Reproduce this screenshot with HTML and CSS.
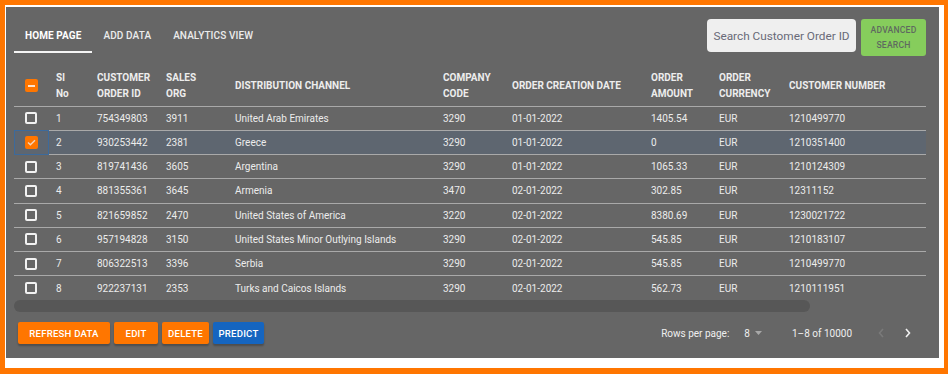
FILE: index.html
```html
<!DOCTYPE html>
<html>
<head>
<meta charset="utf-8">
<link rel="stylesheet" href="styles.css">
</head>
<body>
<div class="frame">
  <div class="panel">
    <div class="topbar">
      <nav class="tabs">
        <span class="tab active">HOME PAGE</span>
        <span class="tab">ADD DATA</span>
        <span class="tab">ANALYTICS VIEW</span>
      </nav>
      <div class="search">
        <div class="search-input">Search Customer Order ID</div>
        <button class="adv-btn">ADVANCED<br>SEARCH</button>
      </div>
    </div>
    <table class="grid">
      <colgroup>
        <col style="width:35px"><col style="width:41px"><col style="width:69px"><col style="width:69px"><col style="width:208px"><col style="width:69px"><col style="width:139px"><col style="width:68px"><col style="width:70px"><col style="width:144px">
      </colgroup>
      <thead>
        <tr>
          <th class="cbcell"><span class="cb cb-ind"><span class="dash"></span></span></th>
          <th>Sl<br>No</th>
          <th>CUSTOMER<br>ORDER ID</th>
          <th>SALES<br>ORG</th>
          <th>DISTRIBUTION CHANNEL</th>
          <th>COMPANY<br>CODE</th>
          <th>ORDER CREATION DATE</th>
          <th>ORDER<br>AMOUNT</th>
          <th>ORDER<br>CURRENCY</th>
          <th>CUSTOMER NUMBER</th>
        </tr>
      </thead>
      <tbody>
        <tr><td class="cbcell"><span class="cb"></span></td><td>1</td><td>754349803</td><td>3911</td><td>United Arab Emirates</td><td>3290</td><td>01-01-2022</td><td>1405.54</td><td>EUR</td><td>1210499770</td></tr>
        <tr class="selected"><td class="cbcell focus"><span class="cb cb-on"><svg width="9" height="7" viewBox="0 0 9 7"><path d="M1 3.5 L3.4 5.8 L8 1.2" fill="none" stroke="#f3d6bf" stroke-width="1.4"/></svg></span></td><td>2</td><td>930253442</td><td>2381</td><td>Greece</td><td>3290</td><td>01-01-2022</td><td>0</td><td>EUR</td><td>1210351400</td></tr>
        <tr><td class="cbcell"><span class="cb"></span></td><td>3</td><td>819741436</td><td>3605</td><td>Argentina</td><td>3290</td><td>01-01-2022</td><td>1065.33</td><td>EUR</td><td>1210124309</td></tr>
        <tr><td class="cbcell"><span class="cb"></span></td><td>4</td><td>881355361</td><td>3645</td><td>Armenia</td><td>3470</td><td>02-01-2022</td><td>302.85</td><td>EUR</td><td>12311152</td></tr>
        <tr><td class="cbcell"><span class="cb"></span></td><td>5</td><td>821659852</td><td>2470</td><td>United States of America</td><td>3220</td><td>02-01-2022</td><td>8380.69</td><td>EUR</td><td>1230021722</td></tr>
        <tr><td class="cbcell"><span class="cb"></span></td><td>6</td><td>957194828</td><td>3150</td><td>United States Minor Outlying Islands</td><td>3290</td><td>02-01-2022</td><td>545.85</td><td>EUR</td><td>1210183107</td></tr>
        <tr><td class="cbcell"><span class="cb"></span></td><td>7</td><td>806322513</td><td>3396</td><td>Serbia</td><td>3290</td><td>02-01-2022</td><td>545.85</td><td>EUR</td><td>1210499770</td></tr>
        <tr class="last"><td class="cbcell"><span class="cb"></span></td><td>8</td><td>922237131</td><td>2353</td><td>Turks and Caicos Islands</td><td>3290</td><td>02-01-2022</td><td>562.73</td><td>EUR</td><td>1210111951</td></tr>
      </tbody>
    </table>
    <div class="scrollbar"><div class="thumb"></div></div>
    <div class="footer">
      <div class="actions">
        <button class="btn orange w-refresh">REFRESH DATA</button>
        <button class="btn orange w-edit">EDIT</button>
        <button class="btn orange w-delete">DELETE</button>
        <button class="btn blue w-predict">PREDICT</button>
      </div>
      <div class="pager">
        <span class="rpp">Rows per page:</span>
        <span class="sel">8 <svg width="7" height="4" viewBox="0 0 7 4"><path d="M0 0 L7 0 L3.5 4 Z" fill="#a8a8a8"/></svg></span>
        <span class="range">1–8 of 10000</span>
        <span class="nav prev"><svg width="6" height="10" viewBox="0 0 6 10"><path d="M5 1 L1.5 5 L5 9" fill="none" stroke="#7a7a7a" stroke-width="1.6"/></svg></span>
        <span class="nav"><svg width="6" height="10" viewBox="0 0 6 10"><path d="M1 1 L4.5 5 L1 9" fill="none" stroke="#f2f2f2" stroke-width="1.6"/></svg></span>
      </div>
    </div>
  </div>
</div>
</body>
</html>
```
FILE: styles.css
```css
* { box-sizing: border-box; }
html, body { margin: 0; padding: 0; }
body {
  background: #ff7600;
  width: 948px;
  height: 374px;
  padding: 5px 0 0 5px;
  font-family: Roboto, "Liberation Sans", sans-serif;
  overflow: hidden;
}
.frame {
  width: 939px;
  height: 363px;
  background: #ffffff;
  padding: 2px 0 0 1px;
}
.panel {
  width: 933px;
  height: 351px;
  background: #666666;
  padding: 12px 13px 0 8px;
}
.topbar {
  display: flex;
  justify-content: space-between;
  align-items: flex-start;
  height: 44px;
}
.tabs { display: flex; }
.tab {
  display: flex;
  align-items: center;
  height: 34px;
  padding: 0 11px 2px;
  font-size: 10px;
  font-weight: 500;
  color: #ececec;
  letter-spacing: 0.1px;
}
.tab.active {
  color: #ffffff;
  font-weight: 700;
  border-bottom: 2px solid #f4f4f4;
  padding-bottom: 0;
}
.search { display: flex; align-items: flex-start; gap: 5px; }
.search-input {
  width: 149px;
  height: 33px;
  background: #efefef;
  border-radius: 4px;
  display: flex;
  align-items: center;
  justify-content: center;
  font-size: 11.8px;
  color: #696a78;
}
.adv-btn {
  width: 65px;
  height: 37px;
  border: none;
  border-radius: 3px;
  background: #86cd5c;
  color: #5f6a60;
  font-family: inherit;
  font-size: 8.6px;
  font-weight: 500;
  line-height: 15px;
  padding: 0;
  letter-spacing: 0.2px;
}
.grid {
  width: 912px;
  border-collapse: collapse;
  table-layout: fixed;
  color: #ececec;
  font-size: 10px;
}
.grid th {
  height: 43px;
  padding: 3px 7px 0;
  text-align: left;
  font-weight: 700;
  line-height: 16px;
  border-bottom: 1px solid #a9a9a9;
  color: #ededed;
}
.grid td {
  height: 24.25px;
  padding: 0 7px;
  border-bottom: 1px solid #a9a9a9;
  white-space: nowrap;
}
.grid tr.last td { border-bottom: none; }
.grid tr.selected td { background: #5e6670; }
.grid td.cbcell { padding: 0 0 0 11px; }
.grid th.cbcell { padding: 3px 0 0 11px; }
.grid td.focus { outline: 1px solid #3c6a9c; outline-offset: -1px; }
.cb {
  display: flex;
  align-items: center;
  justify-content: center;
  width: 12px;
  height: 12px;
  border: 2px solid #f2f2f2;
  border-radius: 2px;
}
.cb-ind, .cb-on {
  width: 13px;
  height: 13px;
  border: none;
  background: #ff7600;
}
.dash {
  width: 7px;
  height: 1.5px;
  background: #fde3cf;
}
.scrollbar { height: 12px; }
.thumb {
  width: 796px;
  height: 12px;
  border-radius: 6px;
  background: #575757;
}
.footer {
  display: flex;
  justify-content: space-between;
  align-items: center;
  margin-top: 10px;
  padding-left: 4px;
}
.actions { display: flex; gap: 4px; }
.btn {
  height: 22px;
  border: none;
  border-radius: 2px;
  color: #ffffff;
  font-family: inherit;
  font-size: 9.6px;
  font-weight: 500;
  padding: 0;
  letter-spacing: 0.2px;
  box-shadow: 0 2px 2px rgba(0,0,0,0.25);
}
.btn.orange { background: #ff7600; }
.btn.blue { background: #1565c0; }
.w-refresh { width: 92px; }
.w-edit { width: 44px; }
.w-delete { width: 47px; }
.w-predict { width: 51px; }
.pager {
  display: flex;
  align-items: center;
  font-size: 10px;
  color: #efefef;
  padding-right: 15px;
}
.rpp { margin-right: 15px; }
.sel { display: flex; align-items: center; gap: 5px; margin-right: 30px; }
.range { margin-right: 26px; }
.nav { display: flex; align-items: center; }
.nav.prev { margin-right: 21px; }
```
